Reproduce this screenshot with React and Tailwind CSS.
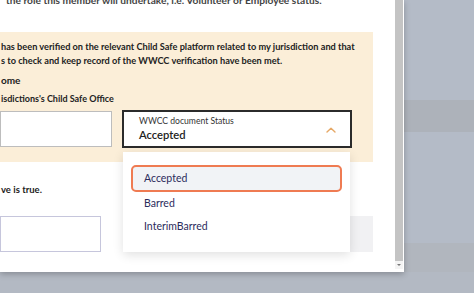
import React from "react";

const font = { fontFamily: "Lato, 'Open Sans', Arial, sans-serif" };

export default function App() {
  return (
    <div className="w-[474px] h-[293px] bg-[#b4bac5] flex flex-col overflow-hidden" style={font}>
      <div className="flex h-[272px]">
        {/* modal */}
        <div className="w-[404px] h-[272px] bg-white flex relative shadow-[0_2px_6px_rgba(0,0,0,0.25)] z-10">
          <div className="w-[395px] h-full overflow-hidden relative flex flex-col">
            <div className="-mt-[5px] pl-[6px] text-[10.2px] leading-[10px] font-bold text-[#444] whitespace-nowrap">
              the role this member will undertake, i.e. Volunteer or Employee status.
            </div>
            {/* yellow panel */}
            <div className="mt-[27px] w-[373px] h-[130px] shrink-0 bg-[#fbeed8] flex flex-col pl-[1px] pt-[8px]">
              <div className="text-[9.2px] leading-[14px] font-bold text-[#222] whitespace-nowrap">
                has been verified on the relevant Child Safe platform related to my jurisdiction and that
              </div>
              <div className="text-[9.2px] leading-[14px] font-bold text-[#222] whitespace-nowrap">
                s to check and keep record of the WWCC verification have been met.
              </div>
              <div className="mt-[5px] text-[10px] leading-[14px] font-bold text-[#222]">ome</div>
              <div className="mt-[5px] text-[9px] leading-[14px] font-bold text-[#222]">isdictions's Child Safe Office</div>
              <div className="flex mt-[4px] items-start">
                <div className="w-[112px] h-[36px] mt-[1px] -ml-[1px] bg-white border border-[#bdbdbd]" />
                <div className="ml-[10px] w-[230px] h-[38px] bg-white border-2 border-[#2b2b2b] flex items-center pl-[15px] pr-[14px]">
                  <div className="flex-1 flex flex-col">
                    <span className="text-[8.6px] leading-[11px] text-[#333]">WWCC document Status</span>
                    <span className="text-[11.2px] leading-[15px] font-semibold text-[#222]">Accepted</span>
                  </div>
                  <svg width="10" height="6" viewBox="0 0 10 6" className="mt-[2px]">
                    <path d="M1 5 L5 1.2 L9 5" fill="none" stroke="#e6a866" strokeWidth="1.4" strokeLinecap="round" strokeLinejoin="round" />
                  </svg>
                </div>
              </div>
            </div>
            <div className="mt-[22px] pl-[1px] text-[9.5px] leading-[12px] font-bold text-[#222]">ve is true.</div>
            <div className="mt-[20px] w-[373px] h-[36px] shrink-0 flex">
              <div className="w-[101px] h-[36px] bg-white border border-[#c6c6dc]" />
              <div className="flex-1 ml-[22px] bg-[#f1f1f3]" />
            </div>
            {/* dropdown overlay */}
            <div className="absolute left-[123px] top-[152px] w-[227px] h-[100px] bg-white shadow-[0_3px_10px_rgba(0,0,0,0.12)] flex flex-col px-[8px] pt-[13px]">
              <div className="h-[27px] rounded-[5px] border-2 border-[#ef7b52] bg-[#f1f3f6] flex items-center pl-[11px] text-[10.5px] text-[#2c2c5c]">
                Accepted
              </div>
              <div className="h-[23px] flex items-center pl-[13px] text-[10.5px] text-[#2c2c5c]">Barred</div>
              <div className="h-[23px] flex items-center pl-[13px] text-[10.5px] text-[#2c2c5c]">InterimBarred</div>
            </div>
          </div>
          {/* scrollbar */}
          <div className="w-[8px] h-[269px] flex flex-col">
            <div className="flex-1 bg-[#c4c4c4]" />
            <div className="h-[8px] bg-[#f4f4f4] flex items-center justify-center">
              <div className="w-0 h-0 border-l-[2px] border-r-[2px] border-t-[2px] border-l-transparent border-r-transparent border-t-[#777]" />
            </div>
          </div>
        </div>
        {/* right background */}
        <div className="flex-1 flex flex-col">
          <div className="h-[100px] bg-[#b4bbc7]" />
          <div className="h-[32px] bg-[#adb2ba]" />
          <div className="h-[111px] bg-[#b4bbc7]" />
          <div className="flex-1 bg-[#b1b6be]" />
        </div>
      </div>
      <div className="flex-1 bg-[#b3b9c3]" />
    </div>
  );
}
